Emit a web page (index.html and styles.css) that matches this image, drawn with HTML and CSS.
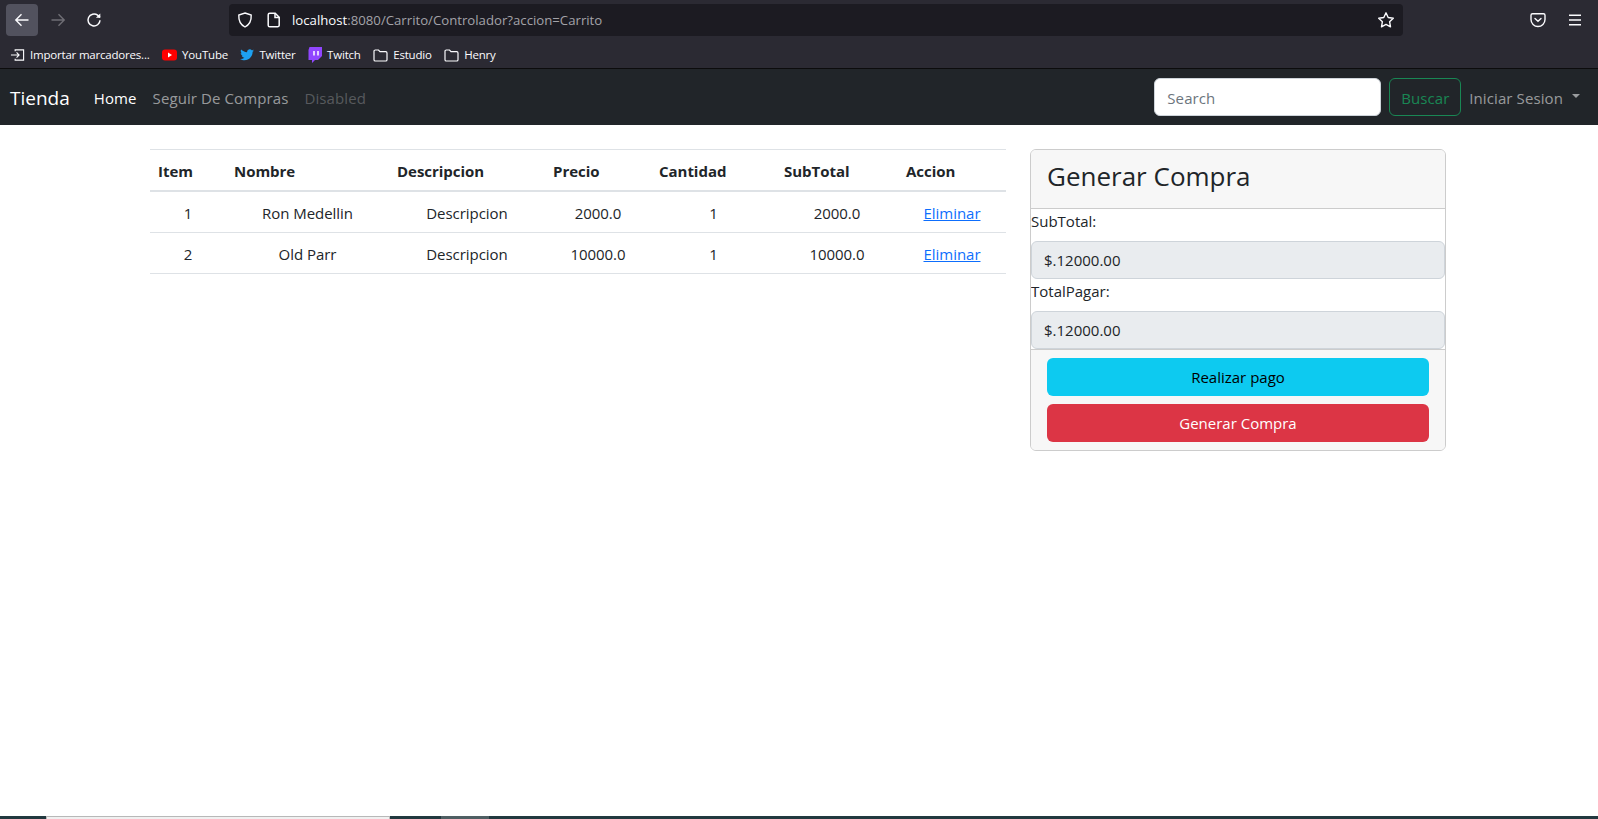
FILE: index.html
```html
<!DOCTYPE html>
<html lang="es">
<head>
<meta charset="utf-8">
<title>Tienda</title>
<link rel="stylesheet" href="styles.css">
</head>
<body>
<div class="browser">
  <div class="toolbar">
    <button class="tb-btn active" aria-label="Back"><svg width="16" height="16" viewBox="0 0 16 16" fill="none" stroke="#fbfbfe" stroke-width="1.4"><path d="M14.5 8H2M7.5 2.3 1.8 8l5.7 5.7"/></svg></button>
    <button class="tb-btn" aria-label="Forward"><svg width="16" height="16" viewBox="0 0 16 16" fill="none" stroke="#6f6e75" stroke-width="1.4"><path d="M1.500 8H14M8.500 2.300 14.200 8l-5.700 5.700"/></svg></button>
    <button class="tb-btn" aria-label="Reload"><svg width="16" height="16" viewBox="0 0 16 16" fill="none" stroke="#fbfbfe" stroke-width="1.5"><path d="M14 8.200A6 6 0 1 1 11.600 3.200L14 5.400"/><path d="M14.300 1.400v4.400H9.900Z" stroke="none" fill="#fbfbfe"/></svg></button>
    <div class="urlbar">
      <svg class="shield" width="16" height="16" viewBox="0 0 16 16" fill="none" stroke="#fbfbfe" stroke-width="1.4"><path d="M8 1 14.200 3c.3 5.600-1.700 9.700-6.200 12C3.500 12.700 1.500 8.600 1.800 3Z"/></svg>
      <svg class="page" width="14" height="16" viewBox="0 0 14 16" fill="none" stroke="#fbfbfe" stroke-width="1.5"><path d="M2.800 1.200h5.400l4 4v8a1.600 1.600 0 0 1-1.600 1.600H2.800a1.600 1.600 0 0 1-1.600-1.600V2.800a1.600 1.600 0 0 1 1.600-1.600Z"/><path d="M8 1.200v4.300h4.200"/></svg>
      <span class="url"><span class="host">localhost</span>:8080/Carrito/Controlador?accion=Carrito</span>
      <svg class="star" width="18" height="18" viewBox="0 0 18 18" fill="none" stroke="#fbfbfe" stroke-width="1.400"><path d="m9 1.800 2.200 4.700 5.100.7-3.700 3.500.9 5.100L9 13.400l-4.500 2.400.9-5.100-3.700-3.500 5.100-.7Z" stroke-linejoin="round"/></svg>
    </div>
    <div class="tb-right">
      <svg width="16" height="16" viewBox="0 0 16 16" fill="none" stroke="#fbfbfe" stroke-width="1.400"><path d="M2.500 1.700h11a1.500 1.500 0 0 1 1.500 1.500v4.300a7 7 0 0 1-14 0V3.200a1.500 1.500 0 0 1 1.500-1.500Z"/><path d="M5 6.500 8 9.300l3-2.800" stroke-linecap="round"/></svg>
      <svg width="14" height="14" viewBox="0 0 14 14" stroke="#fbfbfe" stroke-width="1.400"><path d="M1 2.300h12M1 7h12M1 11.700h12"/></svg>
    </div>
  </div>
  <div class="bookmarks">
    <span class="bm"><svg width="15" height="14" viewBox="0 0 16 14" fill="none" stroke="#fbfbfe" stroke-width="1.200"><path d="M5.500 3V1.500h9v11h-9V11"/><path d="M1 7h8.500M7 4.300 9.700 7 7 9.700"/></svg>Importar marcadores...</span>
    <span class="bm"><svg width="15" height="12" viewBox="0 0 15 12"><rect width="15" height="11" y=".5" rx="3" fill="#f00"/><path d="m6 3.500 4 2.500-4 2.500Z" fill="#fff"/></svg>YouTube</span>
    <span class="bm"><svg width="14" height="12" viewBox="0 0 14 12"><path d="M14 1.500c-.5.2-1 .4-1.600.5.600-.4 1-.9 1.200-1.500-.5.3-1.100.5-1.800.7A2.800 2.800 0 0 0 7 3.200C4.700 3.100 2.600 2 1.100.500c-.7 1.300-.4 2.900.9 3.800-.5 0-.9-.1-1.300-.4 0 1.400 1 2.500 2.300 2.800-.4.100-.8.100-1.300 0 .4 1.100 1.400 1.900 2.700 2-1.300 1-2.800 1.400-4.400 1.200C1.400 10.700 3 11.200 4.400 11.200c5.300 0 8.300-4.500 8.200-8.400.6-.3 1-.8 1.400-1.300Z" fill="#1da1f2"/></svg>Twitter</span>
    <span class="bm"><svg width="14" height="16" viewBox="0 0 14 16"><path d="M1.500 0H14v9l-4 4H7l-3 3v-3H.5V3Z" fill="#9146ff"/><path d="M6 4v4.500M10 4v4.500" stroke="#fff" stroke-width="1.500"/></svg>Twitch</span>
    <span class="bm"><svg width="15" height="13" viewBox="0 0 15 13" fill="none" stroke="#fbfbfe" stroke-width="1.200"><path d="M1 2.300A1.300 1.300 0 0 1 2.300 1h3.200l1.500 1.700h5.700A1.300 1.300 0 0 1 14 4v6.700a1.300 1.300 0 0 1-1.300 1.300H2.300A1.300 1.300 0 0 1 1 10.700Z"/></svg>Estudio</span>
    <span class="bm"><svg width="15" height="13" viewBox="0 0 15 13" fill="none" stroke="#fbfbfe" stroke-width="1.200"><path d="M1 2.300A1.300 1.300 0 0 1 2.300 1h3.200l1.500 1.700h5.700A1.300 1.300 0 0 1 14 4v6.700a1.300 1.300 0 0 1-1.300 1.300H2.300A1.300 1.300 0 0 1 1 10.700Z"/></svg>Henry</span>
  </div>
</div>

<nav class="navbar">
  <a class="brand">Tienda</a>
  <a class="nav-link current">Home</a>
  <a class="nav-link">Seguir De Compras</a>
  <a class="nav-link disabled">Disabled</a>
  <form class="search">
    <input class="search-input" type="text" placeholder="Search">
    <button class="btn-search" type="button">Buscar</button>
  </form>
  <a class="nav-link login">Iniciar Sesion<span class="caret"></span></a>
</nav>

<main class="content">
  <section class="table-col">
    <table class="cart">
      <colgroup><col class="c1"><col class="c2"><col class="c3"><col class="c4"><col class="c5"><col class="c6"><col class="c7"></colgroup>
      <thead>
        <tr><th>Item</th><th>Nombre</th><th>Descripcion</th><th>Precio</th><th>Cantidad</th><th>SubTotal</th><th>Accion</th></tr>
      </thead>
      <tbody>
        <tr><td>1</td><td>Ron Medellin</td><td>Descripcion</td><td>2000.0</td><td>1</td><td>2000.0</td><td><a href="#">Eliminar</a></td></tr>
        <tr><td>2</td><td>Old Parr</td><td>Descripcion</td><td>10000.0</td><td>1</td><td>10000.0</td><td><a href="#">Eliminar</a></td></tr>
      </tbody>
    </table>
  </section>
  <aside class="card">
    <div class="card-header"><h3>Generar Compra</h3></div>
    <div class="card-body">
      <label>SubTotal:</label>
      <input class="field" type="text" value="$.12000.00" readonly>
      <label>TotalPagar:</label>
      <input class="field" type="text" value="$.12000.00" readonly>
    </div>
    <div class="card-footer">
      <button class="btn pay" type="button">Realizar pago</button>
      <button class="btn buy" type="button">Generar Compra</button>
    </div>
  </aside>
</main>

<div class="taskbar">
  <span class="tk-a"></span><span class="tk-b"></span><span class="tk-c"></span><span class="tk-d"></span><span class="tk-e"></span>
</div>
</body>
</html>
```

FILE: styles.css
```css
* { box-sizing: border-box; }
html, body { height: 100%; }
body {
  margin: 0;
  height: 819px;
  overflow: hidden;
  display: flex;
  flex-direction: column;
  background: #fff;
  color: #212529;
  font-family: "Open Sans", "Noto Sans", sans-serif;
  font-size: 15px;
  line-height: 24px;
}
a { text-decoration: none; }

.browser { background: #2b2a33; color: #fbfbfe; flex: none; }
.toolbar { height: 40px; display: flex; align-items: center; padding: 4px 0 4px 6px; }
.tb-btn {
  width: 32px; height: 32px; margin-right: 4px; padding: 0;
  border: 0; border-radius: 4px; background: transparent;
  display: flex; align-items: center; justify-content: center;
}
.tb-btn.active { background: #52525e; }
.urlbar {
  width: 1174px; height: 32px; margin-left: 115px;
  background: #1c1b22; border-radius: 4px;
  display: flex; align-items: center; padding: 0 8px;
}
.shield { margin-right: 14px; }
.page { margin-right: 11px; }
.url { flex: 1; font-size: 13.2px; color: #a3a2a8; }
.host { color: #fbfbfe; }
.tb-right { flex: 1; display: flex; align-items: center; justify-content: flex-end; gap: 22px; padding-right: 16px; }
.bookmarks {
  height: 29px; padding: 2px 0 0 10px;
  display: flex; align-items: center; gap: 12.5px;
  border-bottom: 1px solid #0c0c0d;
  font-size: 11.5px; letter-spacing: -.2px;
}
.bm { display: flex; align-items: center; gap: 5px; }

.navbar {
  flex: none; height: 56px; background: #212529;
  display: flex; align-items: center; padding: 0 18px 0 10px;
  color: rgba(255,255,255,.55);
  letter-spacing: .1px;
}
.brand { color: #fff; font-size: 19px; margin-right: 16px; padding-top: 1px; letter-spacing: 0; }
.nav-link { padding: 1px 8px 0; color: rgba(255,255,255,.55); }
.nav-link.current { color: #fff; }
.nav-link.disabled { color: rgba(255,255,255,.25); }
.search { margin-left: auto; display: flex; gap: 8px; }
.search-input {
  width: 227px; height: 38px; padding: 7px 12px 5px;
  border: 1px solid #ced4da; border-radius: 6px; background: #fff;
  font: inherit; letter-spacing: inherit;
}
.search-input::placeholder { color: #6c757d; opacity: 1; }
.btn-search {
  width: 72px; height: 38px; padding: 1px 0 0;
  background: transparent; border: 1px solid #198754; border-radius: 6px;
  color: #198754; font: inherit; letter-spacing: inherit;
}
.login { display: flex; align-items: center; padding-right: 0; }
.caret {
  margin-left: 9px; margin-top: -3px;
  border-top: 4.8px solid rgba(255,255,255,.55);
  border-left: 4.8px solid transparent; border-right: 4.8px solid transparent;
}

.content { flex: 1; display: flex; align-items: flex-start; padding: 24px 152px 0 150px; gap: 24px; }
.table-col { width: 856px; flex: none; }
.cart { width: 856px; table-layout: fixed; border-collapse: separate; border-spacing: 0; letter-spacing: -.03px; }
.c1 { width: 76px; } .c2 { width: 163px; } .c3 { width: 156px; } .c4 { width: 106px; }
.c5 { width: 125px; } .c6 { width: 122px; } .c7 { width: 108px; }
.cart th { padding: 9px 8px 7px; height: 43px; text-align: left; font-weight: 700; border-top: 1px solid #dee2e6; border-bottom: 2px solid #dee2e6; }
.cart td { padding: 9px 8px 7px; height: 41px; text-align: center; border-bottom: 1px solid #dee2e6; }
.cart a { color: #0d6efd; text-decoration: underline; }

.card {
  width: 416px; flex: none; height: 302px;
  border: 1px solid #ccc; border-radius: 6px; overflow: hidden;
  display: flex; flex-direction: column;
}
.card-header { height: 59px; flex: none; padding: 0 16px 7px; background: #f7f7f7; border-bottom: 1px solid #ccc; display: flex; align-items: center; }
.card-header h3 { margin: 0; font-size: 26px; font-weight: 400; line-height: 34px; }
.card-body { flex: none; height: 140px; }
.card-body label { display: block; height: 32px; }
.field {
  display: block; width: 100%; height: 38px; padding: 6px 12px;
  background: #e9ecef; border: 1px solid #ced4da; border-radius: 6px;
  color: #212529; font: inherit;
}
.card-footer {
  flex: 1; background: #f7f7f7; border-top: 1px solid #ccc;
  padding: 8px 16px; display: flex; flex-direction: column; gap: 8px;
}
.btn { height: 38px; flex: none; border: 0; border-radius: 6px; font: inherit; }
.pay { background: #0dcaf0; color: #000; }
.buy { background: #dc3545; color: #fff; }

.taskbar { flex: none; height: 3px; background: #22393f; display: flex; }
.tk-a { width: 46px; }
.tk-b { width: 344px; background: #f0f0f0; border-top: 1px solid #b8b8b8; border-left: 1px solid #b8b8b8; border-right: 1px solid #b8b8b8; }
.tk-c { width: 51px; }
.tk-d { width: 48px; background: #4f5f63; }
.tk-e { flex: 1; }
```
